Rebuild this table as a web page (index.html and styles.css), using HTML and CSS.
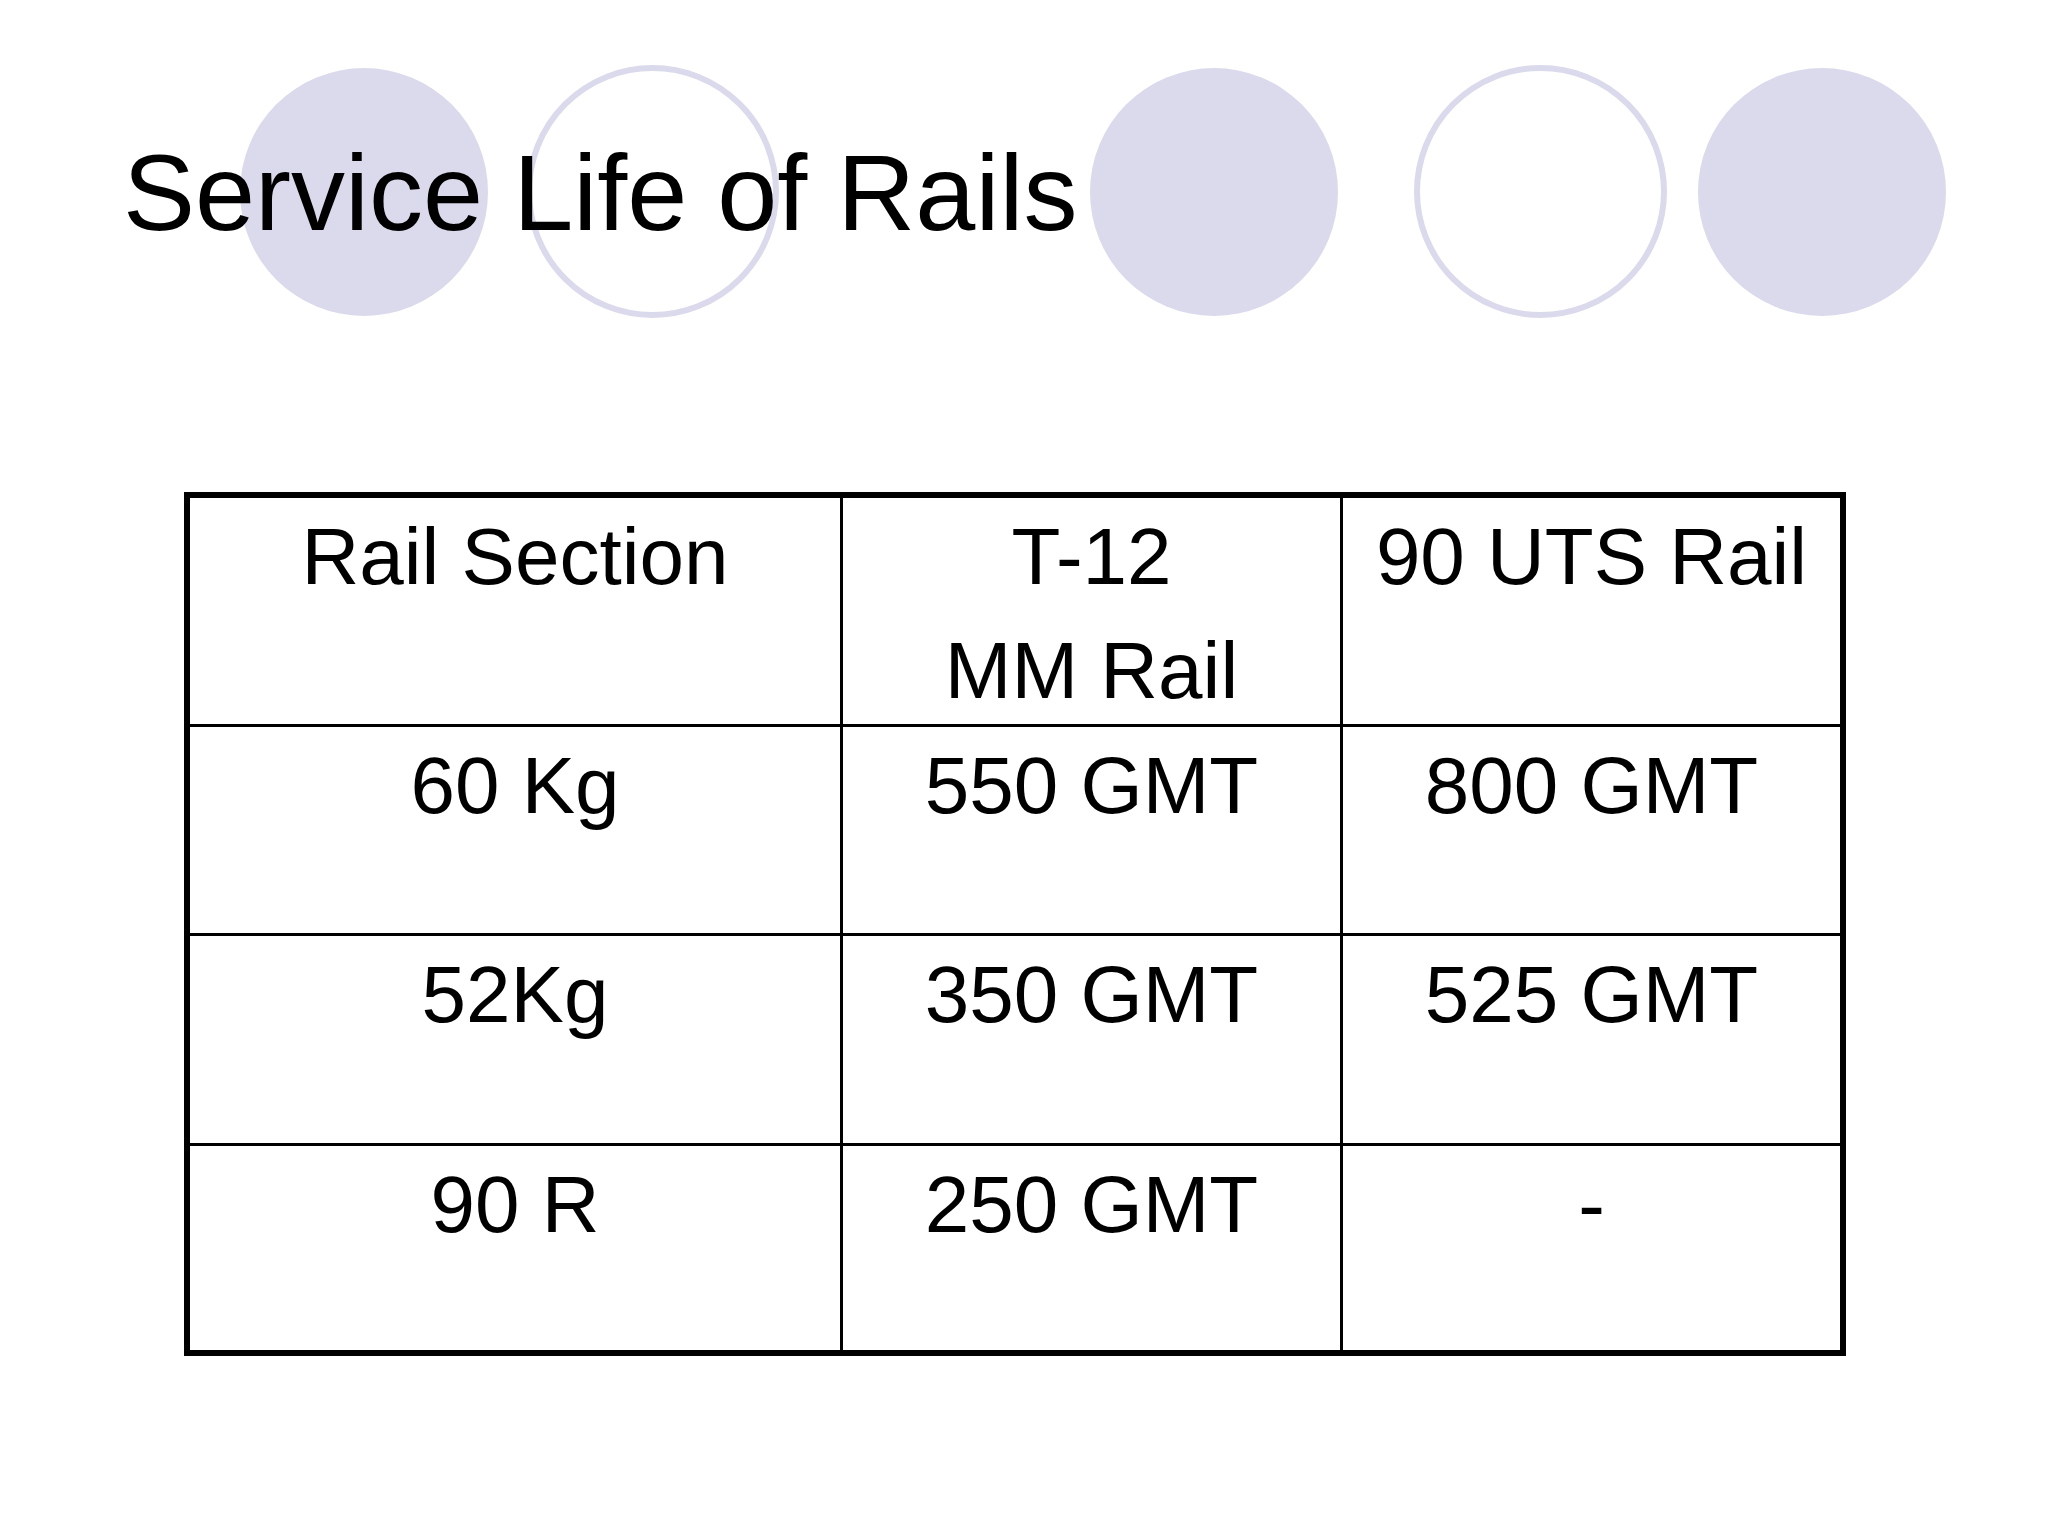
FILE: index.html
```html
<!DOCTYPE html>
<html lang="en">
<head>
<meta charset="utf-8">
<title>Service Life of Rails</title>
<link rel="stylesheet" href="styles.css">
</head>
<body>
<div class="slide">
  <div class="deco" aria-hidden="true">
    <span class="circle filled c1"></span>
    <span class="circle ring c2"></span>
    <span class="circle filled c3"></span>
    <span class="circle ring c4"></span>
    <span class="circle filled c5"></span>
  </div>
  <h1 class="title">Service Life of Rails</h1>
  <div class="table" role="table">
    <div class="cell" role="cell">Rail Section</div>
    <div class="cell" role="cell">T-12<br>MM Rail</div>
    <div class="cell" role="cell">90 UTS Rail</div>
    <div class="cell" role="cell">60 Kg</div>
    <div class="cell" role="cell">550 GMT</div>
    <div class="cell" role="cell">800 GMT</div>
    <div class="cell" role="cell">52Kg</div>
    <div class="cell" role="cell">350 GMT</div>
    <div class="cell" role="cell">525 GMT</div>
    <div class="cell" role="cell">90 R</div>
    <div class="cell" role="cell">250 GMT</div>
    <div class="cell" role="cell">-</div>
  </div>
</div>
</body>
</html>
```

FILE: styles.css
```css
html, body {
  margin: 0;
  padding: 0;
  background: #ffffff;
}

.slide {
  position: relative;
  width: 2048px;
  height: 1536px;
  overflow: hidden;
  background: #ffffff;
  font-family: "Liberation Sans", Arial, sans-serif;
  color: #000000;
  padding-top: 128px;
  box-sizing: border-box;
}

.deco {
  position: absolute;
  inset: 0;
  z-index: 0;
}

.circle {
  position: absolute;
  border-radius: 50%;
  box-sizing: border-box;
}

.filled {
  width: 248px;
  height: 248px;
  top: 68px;
  background: #dadaec;
}

.ring {
  width: 253px;
  height: 253px;
  top: 65px;
  border: 6px solid #dadaec;
  background: transparent;
}

.c1 { left: 240px; }
.c2 { left: 526px; }
.c3 { left: 1090px; }
.c4 { left: 1414px; }
.c5 { left: 1698px; }

.title {
  position: relative;
  z-index: 1;
  margin: 0 0 0 123px;
  font-size: 108px;
  font-weight: normal;
  line-height: 130px;
  height: 130px;
}

.table {
  position: relative;
  z-index: 1;
  margin: 234px 0 0 184px;
  display: grid;
  grid-template-columns: 650px 497px 497px;
  grid-template-rows: 226px 206px 207px 204px;
  gap: 3px;
  width: max-content;
  background: #000000;
  border: 6px solid #000000;
}

.cell {
  background: #ffffff;
  text-align: center;
  font-size: 80px;
  line-height: 114px;
  padding-top: 2px;
  box-sizing: border-box;
}
```
